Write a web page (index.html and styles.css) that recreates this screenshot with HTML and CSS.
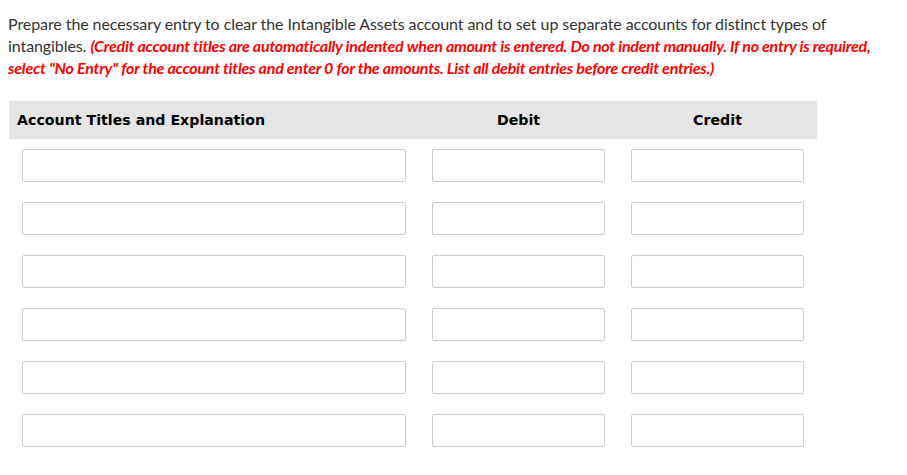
FILE: index.html
```html
<!DOCTYPE html>
<html>
<head>
<meta charset="utf-8">
<link rel="stylesheet" href="styles.css">
</head>
<body>
<p class="question">Prepare the necessary entry to clear the Intangible Assets account and to set up separate accounts for distinct types of intangibles. <em class="note">(Credit account titles are automatically indented when amount is entered. Do not indent manually. If no entry is required, select "No Entry" for the account titles and enter 0 for the amounts. List all debit entries before credit entries.)</em></p>
<table class="journal">
  <thead>
    <tr>
      <th class="col-title">Account Titles and Explanation</th>
      <th class="col-amt">Debit</th>
      <th class="col-amt">Credit</th>
    </tr>
  </thead>
  <tbody>
    <tr><td><input class="field" type="text"></td><td><input class="field" type="text"></td><td><input class="field" type="text"></td></tr>
    <tr><td><input class="field" type="text"></td><td><input class="field" type="text"></td><td><input class="field" type="text"></td></tr>
    <tr><td><input class="field" type="text"></td><td><input class="field" type="text"></td><td><input class="field" type="text"></td></tr>
    <tr><td><input class="field" type="text"></td><td><input class="field" type="text"></td><td><input class="field" type="text"></td></tr>
    <tr><td><input class="field" type="text"></td><td><input class="field" type="text"></td><td><input class="field" type="text"></td></tr>
    <tr><td><input class="field" type="text"></td><td><input class="field" type="text"></td><td><input class="field" type="text"></td></tr>
  </tbody>
</table>
</body>
</html>
```
FILE: styles.css
```css
body {
  margin: 8px;
  background: #fff;
  font-family: Lato, "Open Sans", sans-serif;
  color: #333;
}
.question {
  margin: 5px 0 0 0;
  font-size: 16px;
  line-height: 22px;
  width: 880px;
  letter-spacing: -0.08px;
}
.note {
  color: #f00;
  font-weight: bold;
  font-style: italic;
  letter-spacing: -0.23px;
}
.journal {
  margin-top: 22px;
  margin-left: 1px;
  border-collapse: collapse;
  width: 808px;
}
.journal th {
  background: #e5e5e5;
  height: 38px;
  padding: 0;
  font-family: "DejaVu Sans", Verdana, sans-serif;
  font-size: 14.2px;
  font-weight: bold;
  color: #000;
}
.col-title {
  width: 410px;
  text-align: left;
  padding-left: 8px !important;
  box-sizing: border-box;
}
.col-amt {
  width: 199px;
  text-align: center;
}
.journal td {
  padding: 10px 13px;
  height: 53px;
  box-sizing: border-box;
}
.field {
  display: block;
  box-sizing: border-box;
  width: 100%;
  height: 33px;
  margin: 0;
  border: 1px solid #ccc;
  border-radius: 2px;
  background: #fff;
}
```
